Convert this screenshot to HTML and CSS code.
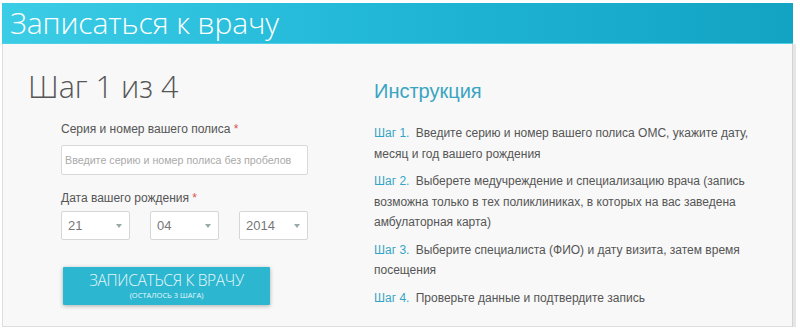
FILE: index.html
```html
<!DOCTYPE html>
<html lang="ru">
<head>
<meta charset="utf-8">
<link rel="stylesheet" href="styles.css">
</head>
<body>
<div class="page">
  <header class="topbar"><h1 class="topbar-title">Записаться к врачу</h1></header>
  <div class="card">
    <div class="card-body">
      <section class="form-col">
        <h2 class="step-title">Шаг 1 из 4</h2>
        <div class="form">
          <label class="field-label">Серия и номер вашего полиса <span class="req">*</span></label>
          <div class="input">Введите серию и номер полиса без пробелов</div>
          <label class="field-label field-label--date">Дата вашего рождения <span class="req">*</span></label>
          <div class="selects">
            <div class="select"><span>21</span><span class="caret"></span></div>
            <div class="select"><span>04</span><span class="caret"></span></div>
            <div class="select"><span>2014</span><span class="caret"></span></div>
          </div>
          <button class="btn">
            <span class="btn-main">ЗАПИСАТЬСЯ К ВРАЧУ</span>
            <span class="btn-sub">(ОСТАЛОСЬ 3 ШАГА)</span>
          </button>
        </div>
      </section>
      <section class="info-col">
        <h2 class="info-title">Инструкция</h2>
        <p class="step"><span class="step-num">Шаг 1.</span> Введите серию и номер вашего полиса ОМС, укажите дату, месяц и год вашего рождения</p>
        <p class="step"><span class="step-num">Шаг 2.</span> Выберете медучреждение и специализацию врача (запись возможна только в тех поликлиниках, в которых на вас заведена амбулаторная карта)</p>
        <p class="step"><span class="step-num">Шаг 3.</span> Выберите специалиста (ФИО) и дату визита, затем время посещения</p>
        <p class="step"><span class="step-num">Шаг 4.</span> Проверьте данные и подтвердите запись</p>
      </section>
    </div>
  </div>
</div>
</body>
</html>
```

FILE: styles.css
```css
* { box-sizing: border-box; }
html, body { margin: 0; padding: 0; background: #fff; }
body { font-family: "Liberation Sans", Arial, sans-serif; color: #555; }
.page { padding: 3px 7px 0 2px; width: 800px; }
.topbar {
  height: 41px;
  background: linear-gradient(to right, #3ccde6 0%, #22b8d8 45%, #13a3c3 100%);
  border-bottom: 1px solid #4fd0e6;
  display: flex;
  align-items: center;
}
.topbar-title {
  margin: 0 0 0 8px;
  font-family: "Open Sans", sans-serif;
  font-weight: 300;
  font-size: 30px;
  line-height: 1;
  color: #fff;
  letter-spacing: -0.1px;
}
.card {
  position: relative;
  background: #f8f8f8;
  border: 1px solid #dedede;
  border-top: none;
  border-right: 1px solid #d4d4d4;
  box-shadow: 3px 0 0 #e6e6e6, 0 3px 0 -1px #f2f2f2, 0 4px 0 -1px #dcdcdc;
  height: 283px;
}
.card-body { display: flex; }
.form-col { width: 370px; padding: 22px 0 0 25px; }
.step-title {
  margin: 0;
  font-family: "Open Sans", sans-serif;
  font-weight: 300;
  font-size: 30.5px;
  line-height: 40px;
  color: #555;
}
.form { padding: 16px 0 0 33px; }
.field-label { display: block; font-size: 12px; line-height: 14px; color: #555; }
.req { color: #d9534f; }
.input {
  margin-top: 9px;
  width: 247px;
  height: 30px;
  background: #fff;
  border: 1px solid #d9d9d9;
  border-radius: 2px;
  font-size: 10.7px;
  color: #aaa;
  padding: 0 0 0 3px;
  display: flex;
  align-items: center;
}
.field-label--date { margin-top: 16px; }
.selects { display: flex; gap: 20px; margin-top: 6px; width: 247px; }
.select {
  width: 69px;
  height: 29px;
  background: #fff;
  border: 1px solid #d6d6d6;
  border-radius: 2px;
  display: flex;
  align-items: center;
  justify-content: space-between;
  padding: 0 7px 0 6px;
  font-size: 13px;
  color: #777;
}
.caret {
  width: 0; height: 0;
  border-left: 3.5px solid transparent;
  border-right: 3.5px solid transparent;
  border-top: 4px solid #9aa;
}
.btn {
  margin: 27px 0 0 2px;
  width: 207px;
  height: 38px;
  background: #2cb6d0;
  border: none;
  border-radius: 1px;
  box-shadow: 0 1px 4px rgba(0,0,0,0.3);
  display: flex;
  flex-direction: column;
  align-items: center;
  justify-content: center;
  color: #e8f8fb;
  padding: 0;
}
.btn-main {
  font-family: "Open Sans", sans-serif;
  font-weight: 300;
  font-size: 15.5px;
  line-height: 17px;
  letter-spacing: -0.3px;
}
.btn-sub { font-family: "Open Sans", sans-serif; font-size: 7.5px; line-height: 10px; margin-top: 1px; }
.info-col { flex: 1; padding: 35px 30px 0 1px; }
.info-title {
  margin: 0 0 20px;
  font-family: "Liberation Sans", Arial, sans-serif;
  font-weight: 400;
  font-size: 20px;
  line-height: 24px;
  color: #3aa5c2;
}
.step { margin: 0 0 7px; font-size: 12px; line-height: 20.5px; color: #555; }
.step-num { color: #35a4c4; margin-right: 3px; }
```
